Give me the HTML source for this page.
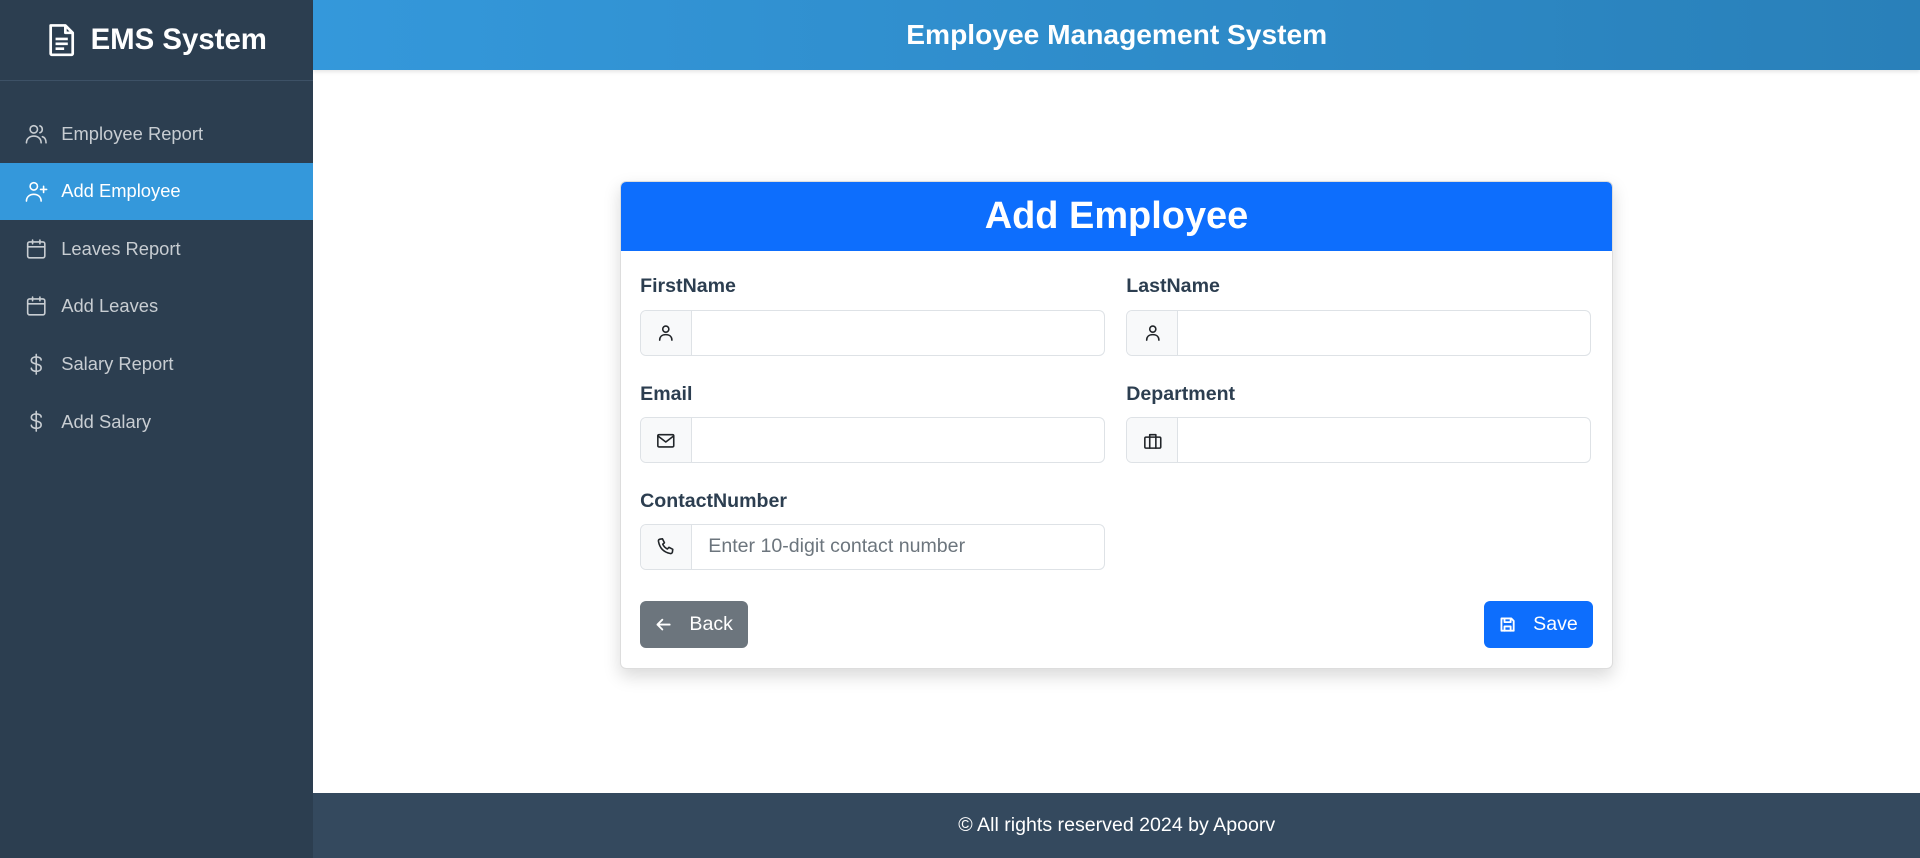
<!DOCTYPE html>
<html><head><meta charset="utf-8"><style>
html,body{margin:0;padding:0;overflow:hidden}
body{width:1568px;height:701px;zoom:1.22449;font-family:"Liberation Sans",sans-serif;background:#fff;position:relative}
.side{position:absolute;left:0;top:0;width:256px;height:701px;background:#2c3e50}
.logo{height:65px;border-bottom:1px solid #3d5166;display:flex;align-items:center;justify-content:center;color:#fff;font-size:24px;font-weight:bold;gap:12px}
.nav{margin-top:20px}
.item{height:47px;display:flex;align-items:center;padding-left:20px;color:#c8cdd2;font-size:15px}
.item svg{width:20px;height:20px;margin-right:10px;fill:none;stroke:currentColor;stroke-width:1.3;stroke-linecap:round;stroke-linejoin:round}
.item.act{background:#3498db;color:#fff}
.head{position:absolute;left:256px;top:0;right:0;height:57px;background:linear-gradient(90deg,#3498db,#2980b9);color:#fff;font-size:23px;font-weight:bold;display:flex;align-items:center;justify-content:center;box-shadow:0 2px 3px rgba(0,0,0,.1)}
.foot{position:absolute;left:256px;right:0;top:648px;height:53px;background:#34495e;color:#fff;font-size:16px;display:flex;align-items:center;justify-content:center}
.card{position:absolute;left:506px;top:148px;width:810px;height:397px;border:1px solid #ddd;border-radius:5px;box-shadow:0 6px 14px rgba(0,0,0,.15);overflow:hidden;background:#fff}
.ch{height:56px;background:#0d6efd;color:#fff;font-size:31px;font-weight:bold;display:flex;align-items:center;justify-content:center}
.lab{position:absolute;font-size:16px;font-weight:bold;color:#2c3e50}
.inp{position:absolute;width:378px;height:36px;border:1px solid #dee2e6;border-radius:5px;display:flex;overflow:hidden}
.ad{width:41px;background:#f8f9fa;border-right:1px solid #dee2e6;display:flex;align-items:center;justify-content:center}
.ad svg{width:16px;height:16px;fill:none;stroke:#212529;stroke-width:1.3;stroke-linecap:round;stroke-linejoin:round}
.ph{padding-left:13px;display:flex;align-items:center;color:#6c757d;font-size:16px}
.btn{position:absolute;top:342px;height:38px;border-radius:5px;color:#fff;font-size:16px;display:flex;align-items:center;justify-content:center;gap:14px}
.btn svg{width:14px;height:14px;fill:none;stroke:#fff;stroke-width:1.5;stroke-linecap:round;stroke-linejoin:round}
</style></head><body>
<div class="side">
<div class="logo"><svg width="24" height="28" viewBox="0 0 24 28" fill="none" stroke="#fff" stroke-width="2.2" stroke-linejoin="round"><path d="M3 2h12l6 6v17a1 1 0 0 1-1 1H4a1 1 0 0 1-1-1z"/><path d="M15 2v6h6M7 13h10M7 17h10M7 21h7"/></svg>EMS System</div>
<div class="nav">
<div class="item"><svg viewBox="0 0 20 20"><circle cx="8" cy="6" r="3"/><path d="M2 17c0-3.5 2.7-5.5 6-5.5s6 2 6 5.5"/><path d="M13 3.2a3 3 0 0 1 0 5.6M15 12c2 .6 3 2.5 3 5"/></svg>Employee Report</div>
<div class="item act"><svg viewBox="0 0 20 20"><circle cx="8" cy="6" r="3"/><path d="M2 18c0-3.5 2.7-5.5 6-5.5s6 2 6 5.5M16 6v5M13.5 8.5h5"/></svg>Add Employee</div>
<div class="item"><svg viewBox="0 0 20 20"><rect x="3" y="4" width="14" height="13" rx="1.5"/><path d="M3 8h14M7 2.5v3M13 2.5v3"/></svg>Leaves Report</div>
<div class="item"><svg viewBox="0 0 20 20"><rect x="3" y="4" width="14" height="13" rx="1.5"/><path d="M3 8h14M7 2.5v3M13 2.5v3"/></svg>Add Leaves</div>
<div class="item"><svg viewBox="0 0 20 20"><path d="M10 2v16M14 6.5c0-1.5-1.8-2.5-4-2.5s-4 1-4 2.8c0 4 8 2 8 6.2 0 1.8-1.8 2.8-4 2.8s-4-1-4-2.6"/></svg>Salary Report</div>
<div class="item"><svg viewBox="0 0 20 20"><path d="M10 2v16M14 6.5c0-1.5-1.8-2.5-4-2.5s-4 1-4 2.8c0 4 8 2 8 6.2 0 1.8-1.8 2.8-4 2.8s-4-1-4-2.6"/></svg>Add Salary</div>
</div></div>
<div class="head">Employee Management System</div>
<div class="card">
<div class="ch">Add Employee</div>
<div class="lab" style="left:16px;top:76px">FirstName</div>
<div class="lab" style="left:413px;top:76px">LastName</div>
<div class="inp" style="left:16px;top:104px"><div class="ad"><svg viewBox="0 0 16 16"><circle cx="8" cy="5" r="2.5"/><path d="M3 14c0-3 2.2-4.5 5-4.5s5 1.5 5 4.5"/></svg></div></div>
<div class="inp" style="left:413px;top:104px"><div class="ad"><svg viewBox="0 0 16 16"><circle cx="8" cy="5" r="2.5"/><path d="M3 14c0-3 2.2-4.5 5-4.5s5 1.5 5 4.5"/></svg></div></div>
<div class="lab" style="left:16px;top:164px">Email</div>
<div class="lab" style="left:413px;top:164px">Department</div>
<div class="inp" style="left:16px;top:192px"><div class="ad"><svg viewBox="0 0 16 16"><rect x="1.5" y="3" width="13" height="10" rx="1"/><path d="M1.5 4l6.5 5 6.5-5"/></svg></div></div>
<div class="inp" style="left:413px;top:192px"><div class="ad"><svg viewBox="0 0 16 16"><rect x="1.5" y="5" width="13" height="9" rx="1"/><path d="M5.5 5V3h5v2M5.5 5v9M10.5 5v9"/></svg></div></div>
<div class="lab" style="left:16px;top:251px">ContactNumber</div>
<div class="inp" style="left:16px;top:279px"><div class="ad"><svg viewBox="0 0 16 16"><path d="M3 1.8l2.3-.3 1.6 3.2-1.4 1.2c.8 1.8 2 3 3.8 3.9l1.3-1.4 3.1 1.7-.3 2.3c-.2.8-1 1.3-1.8 1.1C6.5 12.5 3 9 2 3.5c-.1-.8.3-1.5 1-1.7z"/></svg></div><div class="ph">Enter 10-digit contact number</div></div>
<div class="btn" style="left:16px;width:88px;background:#6c757d"><svg viewBox="0 0 14 14"><path d="M12 7H2M6 3L2 7l4 4"/></svg>Back</div>
<div class="btn" style="left:705px;width:89px;background:#0d6efd"><svg viewBox="0 0 14 14"><path d="M2 2h8l2 2v8H2z"/><path d="M4.5 2v3h5V2M4.5 12V8.5h5V12"/></svg>Save</div>
</div>
<div class="foot">© All rights reserved 2024 by Apoorv</div>
</body></html>
